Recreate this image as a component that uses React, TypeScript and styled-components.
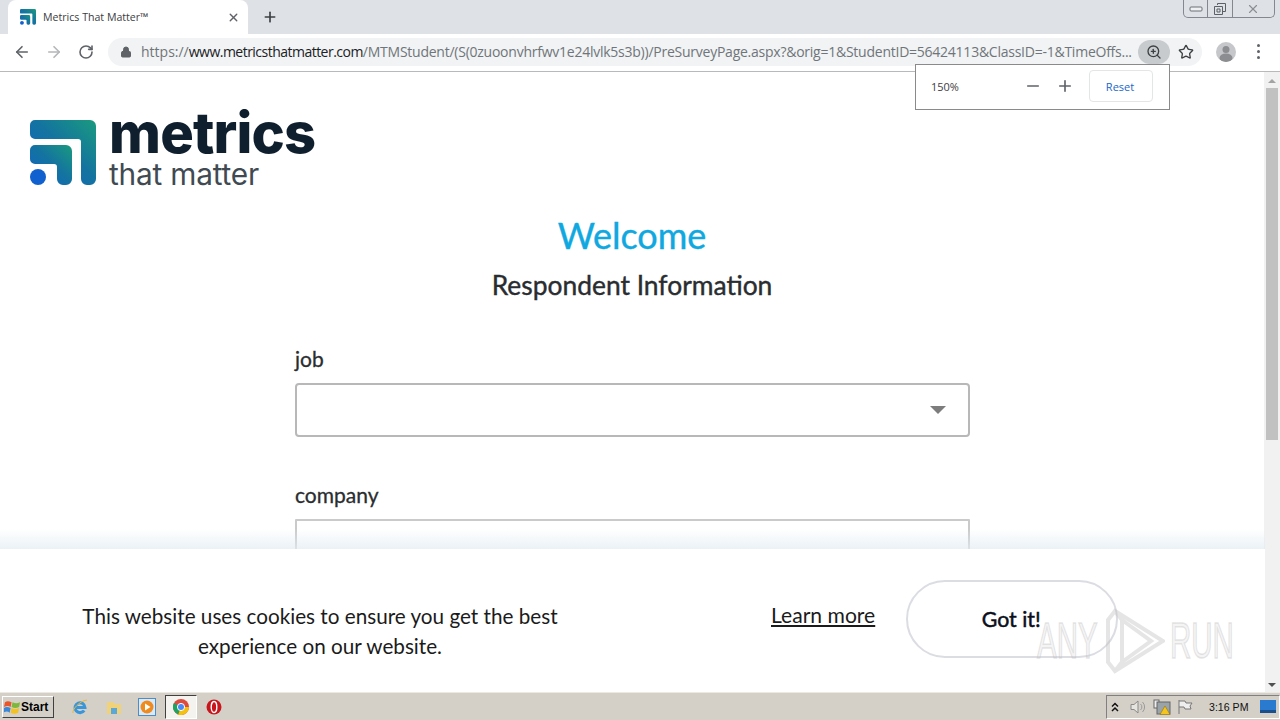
import styled, { createGlobalStyle } from 'styled-components'
import { ArrowLeft, ArrowRight, RotateCw, Lock, ZoomIn, Star, X, Plus, Minus } from 'lucide-react'

const GlobalStyle = createGlobalStyle`
  html, body {
    margin: 0;
    padding: 0;
    overflow: hidden;
  }
  * {
    box-sizing: border-box;
  }
`

const Screen = styled.div`
  position: relative;
  width: 1280px;
  height: 720px;
  display: flex;
  flex-direction: column;
  background: #fff;
  overflow: hidden;
  font-family: 'Open Sans', 'DejaVu Sans', sans-serif;
`

const TabStrip = styled.div`
  position: relative;
  height: 34px;
  flex: none;
  display: flex;
  align-items: flex-end;
  padding-left: 8px;
  background: #dee1e6;
`

const Tab = styled.div`
  width: 240px;
  height: 34px;
  display: flex;
  align-items: center;
  padding: 0 8px 0 12px;
  background: #fff;
  border-radius: 8px 8px 0 0;
`

const TabTitle = styled.span`
  flex: 1;
  margin-left: 7px;
  font-family: 'Open Sans', sans-serif;
  font-size: 10.6px;
  color: #3c4043;
  white-space: nowrap;
`

const NewTab = styled.div`
  width: 28px;
  height: 34px;
  margin-left: 8px;
  padding-bottom: 1px;
  display: flex;
  align-items: center;
  justify-content: center;
  color: #3c4043;
`

const WindowButtons = styled.div`
  position: absolute;
  top: 0;
  right: 5px;
  width: 92px;
  height: 18px;
  display: flex;
  border: 1px solid #84888e;
  border-top: 0;
  border-radius: 0 0 5px 5px;
`

const WindowButton = styled.div<{ $wide?: boolean }>`
  width: ${(p) => (p.$wide ? 42 : 25)}px;
  display: flex;
  align-items: center;
  justify-content: center;
  border-right: 1px solid #84888e;
  &:last-child {
    border-right: 0;
  }
`

const Toolbar = styled.div`
  height: 38px;
  flex: none;
  display: flex;
  align-items: center;
  padding: 0 0 2px 6px;
  background: #fff;
  border-bottom: 1px solid #b8b9bb;
`

const NavButton = styled.div<{ $muted?: boolean }>`
  width: 32px;
  height: 32px;
  display: flex;
  align-items: center;
  justify-content: center;
  color: ${(p) => (p.$muted ? '#b4b6b9' : '#5f6368')};
`

const Omnibox = styled.div`
  width: 1094px;
  height: 28px;
  margin-left: 6px;
  display: flex;
  align-items: center;
  padding-left: 12px;
  border-radius: 14px;
  background: #f1f3f4;
`

const UrlText = styled.div`
  flex: 1;
  min-width: 0;
  margin-left: 9px;
  font-family: 'Open Sans', sans-serif;
  font-size: 14px;
  color: #70757a;
  white-space: nowrap;
`

const UrlHost = styled.span`
  letter-spacing: -0.52px;
  color: #202124;
`

const UrlPath = styled.span`
  letter-spacing: -0.245px;
`

const ZoomBadge = styled.div`
  width: 32px;
  height: 24px;
  flex: none;
  display: flex;
  align-items: center;
  justify-content: center;
  margin-left: 4px;
  border-radius: 12px;
  background: #c8cbce;
  color: #3c4043;
`

const StarBox = styled.div`
  width: 32px;
  flex: none;
  display: flex;
  justify-content: center;
  color: #3c4043;
`

const Avatar = styled.div`
  width: 20px;
  height: 20px;
  margin-left: 14px;
  overflow: hidden;
  border-radius: 50%;
  background: #c5c7ca;
`

const Kebab = styled.div`
  margin-left: 21px;
  display: flex;
  flex-direction: column;
  gap: 3px;
`

const Dot = styled.span`
  width: 3px;
  height: 3px;
  background: #5f6368;
  border-radius: 50%;
`

const ZoomPopup = styled.div`
  position: absolute;
  top: 64px;
  left: 915px;
  width: 255px;
  height: 46px;
  display: flex;
  align-items: center;
  padding: 0 16px 2px 15px;
  background: #fff;
  border: 1px solid #8a8a8a;
`

const ZoomValue = styled.span`
  flex: 1;
  font-size: 11px;
  color: #3c4043;
`

const ZoomStep = styled.div`
  width: 32px;
  display: flex;
  justify-content: center;
  color: #5f6368;
`

const ResetButton = styled.div`
  width: 64px;
  height: 32px;
  margin-left: 8px;
  padding-right: 2px;
  display: flex;
  align-items: center;
  justify-content: center;
  border: 1px solid #e4e5e7;
  border-radius: 4px;
  font-size: 11px;
  color: #1a67c9;
`

const Viewport = styled.div`
  flex: 1;
  display: flex;
  min-height: 0;
  overflow: hidden;
`

const Page = styled.main`
  flex: 1;
  min-width: 0;
  padding: 37px 0 0 30px;
`

const LogoRow = styled.div`
  display: flex;
  height: 78px;
`

const MarkSlot = styled.div`
  margin-top: 11px;
  height: 66px;
`

const LogoWords = styled.div`
  margin-left: 13px;
  display: flex;
  flex-direction: column;
`

const LogoBig = styled.div`
  margin-top: 1px;
  font-family: 'Inter', sans-serif;
  font-size: 56px;
  line-height: 46px;
  font-weight: 800;
  letter-spacing: -0.8px;
  color: #0f1f2e;
`

const LogoSmall = styled.div`
  margin-top: 2px;
  font-family: 'Inter', sans-serif;
  font-size: 29.8px;
  line-height: 32px;
  font-weight: 400;
  letter-spacing: -0.2px;
  color: #3f4a52;
`

const Welcome = styled.h1`
  margin: 26px 0 0;
  padding-right: 30px;
  text-align: center;
  font-family: 'Lato', sans-serif;
  font-size: 36px;
  line-height: 44px;
  font-weight: 400;
  -webkit-text-stroke: 0.4px #0fa8e0;
  color: #0fa8e0;
`

const Subtitle = styled.h2`
  margin: 11px 0 0;
  padding-right: 30px;
  text-align: center;
  font-family: 'Lato', sans-serif;
  font-size: 26.4px;
  line-height: 34px;
  font-weight: 400;
  -webkit-text-stroke: 0.4px #2a2d30;
  color: #2a2d30;
`

const Form = styled.form`
  width: 675px;
  margin: 43px 0 0 265px;
  display: flex;
  flex-direction: column;
  gap: 44px;
`

const Field = styled.div`
  display: flex;
  flex-direction: column;
  gap: 10px;
`

const Label = styled.label`
  font-family: 'Lato', sans-serif;
  font-size: 21px;
  line-height: 28px;
  font-weight: 400;
  -webkit-text-stroke: 0.3px #2a2d30;
  color: #2a2d30;
`

const InputBox = styled.div<{ $dark?: boolean }>`
  height: 54px;
  display: flex;
  align-items: center;
  justify-content: flex-end;
  padding-right: 22px;
  background: #fff;
  border: 2px solid ${(p) => (p.$dark ? '#b8b8b8' : '#cacaca')};
  border-radius: ${(p) => (p.$dark ? 4 : 1)}px;
`

const Caret = styled.span`
  width: 0;
  height: 0;
  border-left: 8px solid transparent;
  border-right: 8px solid transparent;
  border-top: 8px solid #7d7d7d;
`

const Scrollbar = styled.div`
  width: 16px;
  flex: none;
  display: flex;
  flex-direction: column;
  align-items: center;
  background: #f1f1f1;
`

const ScrollArrow = styled.span<{ $down?: boolean }>`
  width: 0;
  height: 0;
  margin: ${(p) => (p.$down ? 'auto 0 5px' : '7px 0 5px')};
  border-left: 4px solid transparent;
  border-right: 4px solid transparent;
  ${(p) => (p.$down ? 'border-top: 4px solid #505050;' : 'border-bottom: 4px solid #a3a3a3;')}
`

const ScrollThumb = styled.div`
  width: 12px;
  height: 352px;
  background: #c1c1c1;
`

const CookieBanner = styled.section`
  position: absolute;
  left: 0;
  top: 549px;
  width: 1265px;
  height: 143px;
  display: flex;
  align-items: center;
  background: #fff;
  &::before {
    content: '';
    position: absolute;
    left: 0;
    right: 0;
    top: -20px;
    height: 20px;
    background: linear-gradient(to bottom, rgba(226, 236, 243, 0), rgba(226, 236, 243, 0.7));
  }
`

const CookieText = styled.p`
  width: 640px;
  margin: 20px 0 0;
  text-align: center;
  font-family: 'Lato', sans-serif;
  font-size: 20.7px;
  line-height: 30px;
  color: #1b1b1b;
`

const LearnMore = styled.a`
  margin: 0 0 12px 131px;
  font-family: 'Lato', sans-serif;
  font-size: 21.1px;
  color: #1b1b1b;
  text-decoration: underline;
`

const GotIt = styled.button`
  width: 212px;
  height: 78px;
  margin: 0 0 3px 31px;
  padding: 0 8px 0 6px;
  background: #fff;
  border: 2px solid #dcdde3;
  border-radius: 39px;
  font-family: 'Lato', sans-serif;
  font-size: 21.3px;
  font-weight: 400;
  -webkit-text-stroke: 0.5px #0b0f1a;
  color: #0b0f1a;
`

const Watermark = styled.div`
  position: absolute;
  left: 1037px;
  top: 608px;
  height: 66px;
  display: flex;
  align-items: center;
  gap: 5px;
  pointer-events: none;
  font-family: 'Liberation Sans', sans-serif;
  font-size: 50px;
  color: rgba(200, 200, 200, 0.2);
  -webkit-text-stroke: 1.5px rgba(190, 190, 190, 0.4);
`

const WatermarkWord = styled.span`
  display: block;
  width: 63px;
  line-height: 50px;
  white-space: nowrap;
  transform: scaleX(0.59);
  transform-origin: left center;
`

const Taskbar = styled.footer`
  height: 28px;
  flex: none;
  display: flex;
  align-items: center;
  padding-left: 2px;
  background: #d4d0c8;
  border-top: 1px solid #ece9e2;
`

const StartButton = styled.div`
  width: 52px;
  height: 22px;
  display: flex;
  align-items: center;
  gap: 0;
  padding-left: 1px;
  background: #d4d0c8;
  border: 1px solid;
  border-color: #fff #404040 #404040 #fff;
  font-family: 'Liberation Sans', sans-serif;
  font-size: 12px;
  font-weight: 700;
  color: #000;
`

const QuickLaunch = styled.div<{ $active?: boolean }>`
  width: 32px;
  height: 24px;
  display: flex;
  align-items: center;
  justify-content: center;
  ${(p) =>
    p.$active &&
    `
    background: #f4f3ef;
    border: 1px solid;
    border-color: #404040 #fff #fff #404040;
  `}
`

const QuickLaunchList = styled.div`
  margin-left: 10px;
  display: flex;
  gap: 1.5px;
`

const Tray = styled.div`
  height: 24px;
  margin-left: auto;
  width: 174px;
  display: flex;
  align-items: center;
  border: 1px solid;
  border-color: #808080 #fff #fff #808080;
`

const TrayIcon = styled.div`
  width: 23.5px;
  flex: none;
  display: flex;
  justify-content: center;
  &:first-child {
    margin-left: -4px;
  }
`

const Clock = styled.span`
  margin-left: 12px;
  width: 51px;
  font-family: 'Liberation Sans', sans-serif;
  font-size: 10.6px;
  color: #111;
  white-space: nowrap;
`

const LogoMark = ({ size }: { size: number }) => (
  <svg width={size} height={size} viewBox="0 0 66 66">
    <defs>
      <linearGradient id="mark" x1="0" y1="1" x2="1" y2="0">
        <stop offset="0" stopColor="#1160c8" />
        <stop offset="0.55" stopColor="#14749f" />
        <stop offset="1" stopColor="#1a9a7e" />
      </linearGradient>
    </defs>
    <path
      fill="url(#mark)"
      d="M5 0H60a6 6 0 0 1 6 6V59a6 6 0 0 1-6 6H57a6 6 0 0 1-6-6V22a3 3 0 0 0-3-3H5a5 5 0 0 1-5-5V5a5 5 0 0 1 5-5Z"
    />
    <path
      fill="url(#mark)"
      d="M5 25H36a6 6 0 0 1 6 6V59a6 6 0 0 1-6 6H33a6 6 0 0 1-6-6V47a3 3 0 0 0-3-3H5a5 5 0 0 1-5-5V30a5 5 0 0 1 5-5Z"
    />
    <circle cx="8" cy="57" r="8" fill="#1160d0" />
  </svg>
)

const WindowsFlag = () => (
  <svg width="17" height="16" viewBox="0 0 18 16">
    <path fill="#e8562a" d="M1 3c2-1.500 4-1.500 7 0l-1 5c-2-1.500-4-1.500-7 0Z" />
    <path fill="#7db83a" d="M9 3c3 1.500 5 1.500 8 0l-1 5c-3 1.500-5 1.500-8 0Z" />
    <path fill="#3a86d8" d="M0 9c2-1.500 4-1.500 7 0l-1 5c-2-1.500-4-1.500-7 0Z" />
    <path fill="#f4c21f" d="M8 9c3 1.500 5 1.500 8 0l-1 5c-3 1.500-5 1.500-8 0Z" />
  </svg>
)

const App = () => {
  return (
    <Screen>
      <GlobalStyle />
      <TabStrip>
        <Tab>
          <LogoMark size={16} />
          <TabTitle>Metrics That Matter™</TabTitle>
          <X size={13} color="#5f6368" strokeWidth={2.5} />
        </Tab>
        <NewTab>
          <Plus size={16} strokeWidth={2.5} />
        </NewTab>
        <WindowButtons>
          <WindowButton>
            <svg width="14" height="6" viewBox="0 0 14 6">
              <rect x="1" y="1" width="12" height="4" rx="1" fill="#eef0f2" stroke="#6c7076" />
            </svg>
          </WindowButton>
          <WindowButton>
            <svg width="14" height="14" viewBox="0 0 14 14">
              <path fill="none" stroke="#5b6066" d="M4.500 3V1.500h8v8H10M1.500 4.500h8v8h-8ZM4 7h3v3H4Z" />
            </svg>
          </WindowButton>
          <WindowButton $wide>
            <X size={14} color="#8b8f94" />
          </WindowButton>
        </WindowButtons>
      </TabStrip>

      <Toolbar>
        <NavButton>
          <ArrowLeft size={18} strokeWidth={2.2} />
        </NavButton>
        <NavButton $muted>
          <ArrowRight size={18} strokeWidth={2.2} />
        </NavButton>
        <NavButton>
          <RotateCw size={16} strokeWidth={2.4} />
        </NavButton>
        <Omnibox>
          <Lock size={12} color="#5f6368" fill="#5f6368" />
          <UrlText>
            https://<UrlHost>www.metricsthatmatter.com</UrlHost>
            <UrlPath>
              /MTMStudent/(S(0zuoonvhrfwv1e24lvlk5s3b))/PreSurveyPage.aspx?&orig=1&StudentID=56424113&ClassID=-1&TimeOffs...
            </UrlPath>
          </UrlText>
          <ZoomBadge>
            <ZoomIn size={16} strokeWidth={2} />
          </ZoomBadge>
          <StarBox>
            <Star size={16} strokeWidth={2} />
          </StarBox>
        </Omnibox>
        <Avatar>
          <svg width="20" height="20" viewBox="0 0 20 20">
            <circle cx="10" cy="7.500" r="3.500" fill="#8b8d90" />
            <ellipse cx="10" cy="16" rx="6.500" ry="4.500" fill="#8b8d90" />
          </svg>
        </Avatar>
        <Kebab>
          <Dot />
          <Dot />
          <Dot />
        </Kebab>
      </Toolbar>

      <ZoomPopup>
        <ZoomValue>150%</ZoomValue>
        <ZoomStep>
          <Minus size={18} strokeWidth={2.2} />
        </ZoomStep>
        <ZoomStep>
          <Plus size={18} strokeWidth={2.2} />
        </ZoomStep>
        <ResetButton>Reset</ResetButton>
      </ZoomPopup>

      <Viewport>
        <Page>
          <LogoRow>
            <MarkSlot>
              <LogoMark size={66} />
            </MarkSlot>
            <LogoWords>
              <LogoBig>metrics</LogoBig>
              <LogoSmall>that matter</LogoSmall>
            </LogoWords>
          </LogoRow>
          <Welcome>Welcome</Welcome>
          <Subtitle>Respondent Information</Subtitle>
          <Form>
            <Field>
              <Label>job</Label>
              <InputBox $dark>
                <Caret />
              </InputBox>
            </Field>
            <Field>
              <Label>company</Label>
              <InputBox />
            </Field>
          </Form>
        </Page>
        <Scrollbar>
          <ScrollArrow />
          <ScrollThumb />
          <ScrollArrow $down />
        </Scrollbar>
      </Viewport>

      <CookieBanner>
        <CookieText>
          This website uses cookies to ensure you get the best
          <br />
          experience on our website.
        </CookieText>
        <LearnMore>Learn more</LearnMore>
        <GotIt>Got it!</GotIt>
      </CookieBanner>

      <Watermark>
        <WatermarkWord>ANY</WatermarkWord>
        <svg width="60" height="66" viewBox="0 0 60 66">
          <path
            fill="none"
            stroke="rgba(190,190,190,0.4)"
            strokeWidth="4"
            d="M10 3 58 33 10 63 3 54V12ZM10 3 17 12V54L10 63M17 12 46 33 17 54"
          />
        </svg>
        <WatermarkWord>RUN</WatermarkWord>
      </Watermark>

      <Taskbar>
        <StartButton>
          <WindowsFlag />
          Start
        </StartButton>
        <QuickLaunchList>
          <QuickLaunch>
            <svg width="18" height="18" viewBox="0 0 18 18">
              <path
                fill="none"
                stroke="#3b95d9"
                strokeWidth="3"
                d="M4 9.500h10a5 5 0 1 0-.8 3M4 9.500a5 5 0 0 0 8.500 3.500"
              />
              <path fill="none" stroke="#e3b93c" strokeWidth="1" d="M2 15C1 12 8 3 16 2" />
            </svg>
          </QuickLaunch>
          <QuickLaunch>
            <svg width="18" height="18" viewBox="0 0 18 18">
              <path fill="#f0d27a" d="M2 4h6l2 2h6v10H2Z" />
              <path fill="#5ba7d8" d="M6 10h6v6H6Z" />
            </svg>
          </QuickLaunch>
          <QuickLaunch>
            <svg width="18" height="18" viewBox="0 0 18 18">
              <rect x="0.500" y="0.500" width="17" height="17" fill="#dbe9f5" stroke="#4d8cc4" />
              <circle cx="9" cy="9" r="6.500" fill="#ef8a1f" />
              <path fill="#fff" d="M7 5.500 12.500 9 7 12.500Z" />
            </svg>
          </QuickLaunch>
          <QuickLaunch $active>
            <svg width="16" height="16" viewBox="0 0 16 16">
              <circle cx="8" cy="8" r="8" fill="#dd4b3e" />
              <path fill="#f4c20d" d="M8 8 16 8A8 8 0 0 1 5 15.400Z" />
              <path fill="#1da462" d="M8 8 5 15.400A8 8 0 0 1 1 4Z" />
              <circle cx="8" cy="8" r="3.600" fill="#4a8af4" stroke="#fff" />
            </svg>
          </QuickLaunch>
          <QuickLaunch>
            <svg width="16" height="16" viewBox="0 0 16 16">
              <circle cx="8" cy="8" r="7.500" fill="#c9161d" />
              <ellipse cx="8" cy="8" rx="2.800" ry="5.500" fill="none" stroke="#fff" strokeWidth="1.400" />
            </svg>
          </QuickLaunch>
        </QuickLaunchList>
        <Tray>
          <TrayIcon>
            <svg width="8" height="10" viewBox="0 0 8 10">
              <path fill="none" stroke="#111" strokeWidth="1.500" d="M1 4.500 4 1.500 7 4.500M1 9 4 6 7 9" />
            </svg>
          </TrayIcon>
          <TrayIcon>
            <svg width="18" height="16" viewBox="0 0 18 16">
              <path fill="#e6e4de" stroke="#8a8a8a" d="M2 5.500h3L9 2v12L5 10.500H2Z" />
              <path fill="none" stroke="#9a9a9a" d="M11.500 5a4 4 0 0 1 0 6M13.500 3a7 7 0 0 1 0 10" />
            </svg>
          </TrayIcon>
          <TrayIcon>
            <svg width="18" height="16" viewBox="0 0 18 16">
              <rect x="1" y="1" width="5" height="8" fill="#eee" stroke="#666" />
              <rect x="4" y="3" width="13" height="12" fill="#9aa3a8" stroke="#666" />
              <path fill="#f4c51e" stroke="#8a6d00" strokeWidth="0.500" d="M12 7 17 15.500H7Z" />
            </svg>
          </TrayIcon>
          <TrayIcon>
            <svg width="18" height="16" viewBox="0 0 18 16">
              <path fill="#eee" stroke="#777" d="M3 1v14M3 2h6l1 2h6l-2 3 1 3H9L8 8H3" />
            </svg>
          </TrayIcon>
          <Clock>3:16 PM</Clock>
          <svg width="16" height="14" viewBox="0 0 16 14">
            <rect x="0" y="0" width="16" height="12" fill="#2a7ad0" />
            <rect x="0" y="10" width="16" height="3" fill="#1b4f8c" />
          </svg>
        </Tray>
      </Taskbar>
    </Screen>
  )
}

export default App
